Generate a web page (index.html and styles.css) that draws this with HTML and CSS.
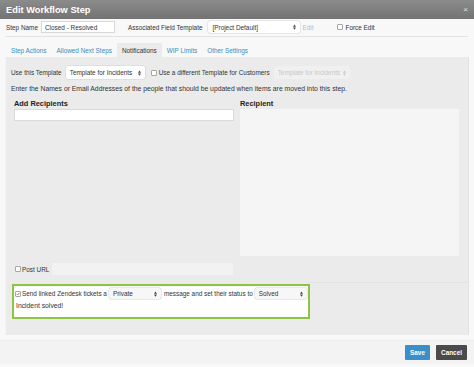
FILE: index.html
```html
<!DOCTYPE html>
<html lang="en">
<head>
    <meta charset="UTF-8">
    <title>Edit Workflow Step</title>
    <link rel="stylesheet" href="styles.css">
</head>
<body>
    <div class="dialog">
        <div class="titlebar">
            <h1>Edit Workflow Step</h1>
            <span class="close">&times;</span>
        </div>

        <div class="step-row">
            <label>Step Name</label>
            <input class="name-input" type="text" value="Closed - Resolved">
            <label class="template-label">Associated Field Template</label>
            <span class="select field-template">[Project Default]
                <svg class="arrows" width="4" height="7" viewBox="0 0 4 7"><path d="M0 3L2 0L4 3Z M0 4L2 7L4 4Z"/></svg>
            </span>
            <a class="edit-link">Edit</a>
            <span class="checkbox force-box"></span>
            <label>Force Edit</label>
        </div>

        <div class="tabs">
            <a class="tab">Step Actions</a>
            <a class="tab">Allowed Next Steps</a>
            <a class="tab active">Notifications</a>
            <a class="tab">WIP Limits</a>
            <a class="tab">Other Settings</a>
        </div>

        <div class="panel">
            <div class="template-row">
                <label>Use this Template</label>
                <span class="select template-select">Template for Incidents
                    <svg class="arrows" width="4" height="7" viewBox="0 0 4 7"><path d="M0 3L2 0L4 3Z M0 4L2 7L4 4Z"/></svg>
                </span>
                <span class="checkbox customer-box"></span>
                <label>Use a different Template for Customers</label>
                <span class="select disabled customer-select">Template for Incidents
                    <svg class="arrows" width="4" height="7" viewBox="0 0 4 7"><path d="M0 3L2 0L4 3Z M0 4L2 7L4 4Z"/></svg>
                </span>
            </div>

            <p class="hint">Enter the Names or Email Addresses of the people that should be updated when items are moved into this step.</p>

            <div class="recipients">
                <div class="recipients-col">
                    <h3>Add Recipients</h3>
                    <input class="recipient-input" type="text">
                </div>
                <div class="recipients-col">
                    <h3>Recipient</h3>
                    <div class="recipient-list"></div>
                </div>
            </div>

            <div class="post-url">
                <span class="checkbox"></span>
                <label>Post URL</label>
                <input class="url-input" type="text">
            </div>

            <div class="zendesk">
                <div class="zendesk-row">
                    <span class="checkbox checked">
                        <svg width="6" height="6" viewBox="0 0 6 6"><path d="M1 3.2L2.4 4.6L5 1.4" fill="none" stroke="#444" stroke-width="0.9"/></svg>
                    </span>
                    <label>Send linked Zendesk tickets a</label>
                    <span class="select private-select">Private
                        <svg class="arrows" width="4" height="7" viewBox="0 0 4 7"><path d="M0 3L2 0L4 3Z M0 4L2 7L4 4Z"/></svg>
                    </span>
                    <label>message and set their status to</label>
                    <span class="select status-select">Solved
                        <svg class="arrows" width="4" height="7" viewBox="0 0 4 7"><path d="M0 3L2 0L4 3Z M0 4L2 7L4 4Z"/></svg>
                    </span>
                </div>
                <div class="zendesk-message">Incident solved!</div>
            </div>
        </div>

        <div class="footer">
            <button class="save-button">Save</button>
            <button class="cancel-button">Cancel</button>
        </div>
    </div>
</body>
</html>
```

FILE: styles.css
```css
body {
    margin: 0;
    background-color: #f8f8f8;
    font-family: "Liberation Sans", Arial, sans-serif;
    font-size: 6.4px;
    color: #333;
}

label {
    white-space: nowrap;
    flex-shrink: 0;
}

.dialog {
    width: 474px;
    height: 367px;
    background-color: #f8f8f8;
}

.titlebar {
    height: 19px;
    padding: 0 6px;
    display: flex;
    justify-content: space-between;
    align-items: center;
    background: linear-gradient(#8b8b8b, #737373);
}

.titlebar h1 {
    margin: 0;
    font-size: 9.3px;
    font-weight: bold;
    color: white;
}

.close {
    color: #e2e2e2;
    font-size: 8px;
}

.step-row {
    margin: 0 6px;
    padding: 2px 0 3px;
    display: flex;
    align-items: center;
    border-bottom: 1px solid #e3e3e3;
}

.name-input {
    width: 74px;
    height: 12px;
    margin-left: 3px;
    padding: 0 3px;
    box-sizing: border-box;
    border: 1px solid #d8d8d8;
    background: white;
    font-family: inherit;
    font-size: 6.4px;
    color: #333;
}

.template-label {
    margin-left: 13px;
}

.select {
    height: 11px;
    padding: 0 4px;
    box-sizing: border-box;
    flex-shrink: 0;
    display: flex;
    justify-content: space-between;
    align-items: center;
    background: white;
    border-radius: 2px;
    box-shadow: 0 0 0 0.5px #d4d4d4;
    white-space: nowrap;
}

.arrows {
    fill: #444;
    width: 3px;
    height: 6px;
}

.field-template {
    width: 92px;
    height: 12px;
    margin-left: 6px;
}

.edit-link {
    margin-left: 2px;
    color: #9cc7df;
}

.checkbox {
    width: 6px;
    height: 6px;
    box-sizing: border-box;
    flex-shrink: 0;
    display: inline-flex;
    align-items: center;
    justify-content: center;
    border: 0.7px solid #a6a6a6;
    border-radius: 1px;
    background: white;
}

.force-box {
    margin-left: 24px;
    margin-right: 2px;
}

.tabs {
    margin: 6px 6px 0;
    display: flex;
    height: 14px;
}

.tab {
    padding: 0 5px;
    display: flex;
    align-items: center;
    color: #3a8dc0;
}

.tab.active {
    background-color: #ebebeb;
    color: #333;
}

.panel {
    margin: 0 6px;
    height: 278px;
    padding: 9px 0 0 5px;
    box-sizing: border-box;
    background-color: #ebebeb;
    box-shadow: -1px 0 0 #f3f3f3, 1px 0 0 #e3e3e3;
}

.template-row {
    display: flex;
    align-items: center;
}

.template-select {
    width: 79px;
    height: 13px;
    margin-left: 4px;
}

.customer-box {
    margin-left: 6px;
    margin-right: 2px;
}

.customer-select {
    width: 76px;
    height: 13px;
    margin-left: 4px;
    background: #f0f0f0;
    box-shadow: none;
    color: #c8c8c8;
}

.customer-select .arrows {
    fill: #c8c8c8;
}

.hint {
    margin: 6px 0 0;
    font-size: 6.8px;
}

.recipients {
    margin: 7px 0 0 3px;
    display: grid;
    grid-template-columns: 220px 219px;
    gap: 6px;
}

.recipients h3 {
    margin: 0 0 1px;
    font-size: 7.4px;
    color: #222;
}

.recipient-input {
    display: block;
    width: 220px;
    height: 12px;
    box-sizing: border-box;
    border: 0.5px solid #dadada;
    background: white;
}

.recipient-list {
    height: 147px;
    background-color: #f5f5f5;
}

.post-url {
    margin: 7px 0 0 4px;
    display: flex;
    align-items: center;
}

.post-url label {
    margin-left: 1px;
}

.url-input {
    width: 181px;
    height: 12px;
    margin-left: 3px;
    box-sizing: border-box;
    border: none;
    background: #f2f2f2;
}

.zendesk {
    margin: 9px 0 0 1px;
    width: 298px;
    height: 35px;
    box-sizing: border-box;
    padding: 2px 0 0 1px;
    border: 2px solid #8cc540;
    background: white;
    position: relative;
}

.zendesk::before {
    content: "";
    position: absolute;
    left: 296px;
    right: -160px;
    top: -4px;
    border-top: 1px solid #e2e2e2;
}

.zendesk-row {
    display: flex;
    align-items: center;
}

.zendesk-row .checkbox {
    margin-right: 1px;
}

.private-select {
    width: 52px;
    height: 11px;
    margin: 0 3px 0 2px;
    background: #f7f7f7;
}

.status-select {
    width: 52px;
    height: 11px;
    margin-left: 2px;
    background: #f7f7f7;
}

.zendesk-message {
    margin: 3px 0 0 1px;
    font-size: 6.8px;
}

.footer {
    margin-top: 5px;
    height: 23px;
    padding: 0 7px 0 0;
    display: flex;
    justify-content: flex-end;
    align-items: center;
    gap: 6px;
    border-top: 1px solid #ececec;
    background-color: #f3f3f3;
}

.save-button,
.cancel-button {
    height: 15px;
    padding: 0;
    border: none;
    border-radius: 1px;
    color: white;
    font-family: inherit;
    font-size: 6.4px;
    font-weight: bold;
}

.save-button {
    width: 25px;
    background-color: #3b8fc8;
}

.cancel-button {
    width: 31px;
    background-color: #4a4a4a;
}
```
